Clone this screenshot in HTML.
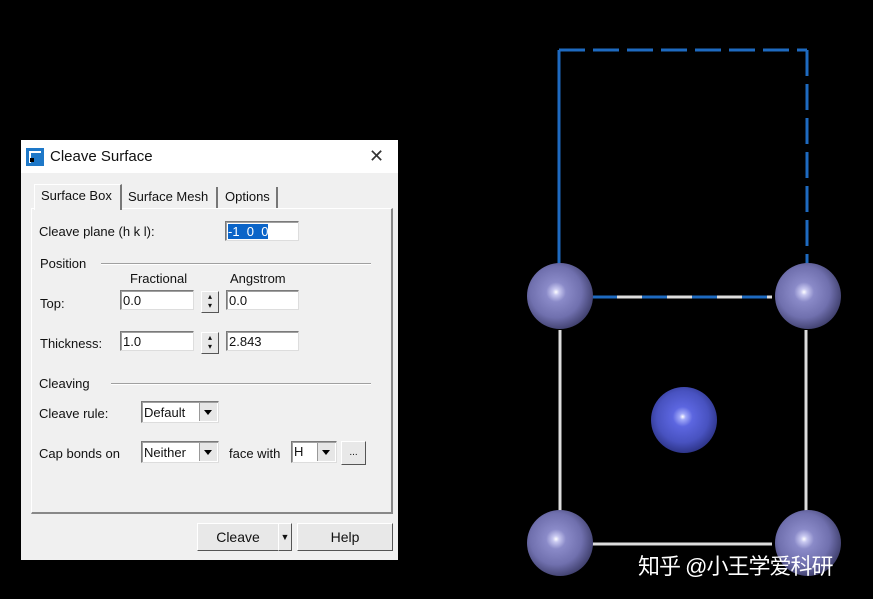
<!DOCTYPE html>
<html><head><meta charset="utf-8"><style>
body{margin:0;width:873px;height:599px;background:#000;position:relative;overflow:hidden;font-family:"Liberation Sans",Arial,sans-serif;font-size:13px;color:#111}
.a{position:absolute}
.dlg{left:21px;top:140px;width:377px;height:420px;background:#f0f0f0}
.tb{left:0;top:0;width:377px;height:33px;background:#fff}
.inp{position:absolute;background:#fff;border:1px solid #7a7a7a;border-right-color:#ddd;border-bottom-color:#ddd;box-shadow:inset 1px 1px 0 #a0a0a0;height:20px;line-height:20px;padding-left:2px;box-sizing:border-box}
.btn{position:absolute;background:#e8e8e8;border:1px solid #fff;border-right-color:#555;border-bottom-color:#555;box-sizing:border-box;text-align:center}
.dd{position:absolute;width:18px;height:18px;top:1px;right:1px;background:#e6e6e6;border-left:1px solid #999;box-sizing:border-box}
.dd:after{content:"";position:absolute;left:4px;top:7px;border:4px solid transparent;border-top:5px solid #000;border-bottom:0}
.hr{position:absolute;height:1px;background:#a0a0a0;border-bottom:1px solid #fff}
</style></head><body>
<svg class="a" style="left:0;top:0" width="873" height="599">
<defs>
<radialGradient id="g" cx="0.44" cy="0.44" r="0.6"><stop offset="0" stop-color="#ffffff"/><stop offset="0.08" stop-color="#c8c8f0"/><stop offset="0.25" stop-color="#8a8ac8"/><stop offset="0.65" stop-color="#7070ae"/><stop offset="1" stop-color="#3c3c68"/></radialGradient>
<radialGradient id="g2" cx="0.48" cy="0.45" r="0.6"><stop offset="0" stop-color="#ffffff"/><stop offset="0.08" stop-color="#a0a8f8"/><stop offset="0.25" stop-color="#5c66e0"/><stop offset="0.65" stop-color="#4852c0"/><stop offset="1" stop-color="#262c78"/></radialGradient>
</defs>
<line x1="559" y1="50" x2="559" y2="265" stroke="#1e6ac0" stroke-width="3"/>
<line x1="559" y1="50" x2="807" y2="50" stroke="#1e6ac0" stroke-width="3" stroke-dasharray="26,8"/>
<line x1="807" y1="50" x2="807" y2="265" stroke="#1e6ac0" stroke-width="3" stroke-dasharray="26,8"/>
<line x1="592" y1="297" x2="772" y2="297" stroke="#ddd" stroke-width="3"/>
<line x1="592" y1="297" x2="772" y2="297" stroke="#1e6ac0" stroke-width="3" stroke-dasharray="25,25"/>
<line x1="560" y1="330" x2="560" y2="512" stroke="#ddd" stroke-width="3"/>
<line x1="806" y1="330" x2="806" y2="512" stroke="#ddd" stroke-width="3"/>
<line x1="592" y1="544" x2="772" y2="544" stroke="#ddd" stroke-width="3"/>
<circle cx="560" cy="296" r="33" fill="url(#g)"/>
<circle cx="808" cy="296" r="33" fill="url(#g)"/>
<circle cx="560" cy="543" r="33" fill="url(#g)"/>
<circle cx="808" cy="543" r="33" fill="url(#g)"/>
<circle cx="684" cy="420" r="33" fill="url(#g2)"/>
</svg>
<div class="a" style="left:638px;top:549px;font-size:22px;letter-spacing:-1px;color:#fff;font-family:'Liberation Sans','Noto Sans CJK SC',sans-serif">知乎 @小王学爱科研</div>
<div class="a dlg">
 <div class="a tb">
  <div class="a" style="left:5px;top:8px;width:18px;height:18px;background:#1e78c8"><div class="a" style="left:3px;top:3px;width:12px;height:12px;border:2px solid #fff;border-right:0;border-bottom:0;box-sizing:border-box"></div><div class="a" style="left:4px;top:10px;width:4px;height:4px;background:#000"></div></div>
  <div class="a" style="left:29px;top:8px;font-size:15px">Cleave Surface</div>
  <div class="a" style="left:348px;top:6px;font-size:18px;color:#333">✕</div>
 </div>
 <div class="a" style="left:10px;top:68px;width:362px;height:306px;border:1px solid #fff;border-right:2px solid #888;border-bottom:2px solid #888;box-sizing:border-box"></div>
 <div class="a" style="left:13px;top:44px;width:88px;height:26px;background:#f0f0f0;border:1px solid #fff;border-right:2px solid #777;border-bottom:0;box-sizing:border-box;padding:3px 0 0 6px">Surface Box</div>
 <div class="a" style="left:102px;top:47px;width:95px;height:21px;border-right:2px solid #777;padding:2px 0 0 5px;box-sizing:border-box">Surface Mesh</div>
 <div class="a" style="left:199px;top:47px;width:58px;height:21px;border-right:2px solid #777;padding:2px 0 0 5px;box-sizing:border-box">Options</div>
 <div class="a" style="left:18px;top:84px">Cleave plane (h k l):</div>
 <div class="inp" style="left:204px;top:81px;width:74px"><span style="background:#0a64c8;color:#fff">-1&nbsp; 0&nbsp; 0</span></div>
 <div class="a" style="left:19px;top:116px">Position</div>
 <div class="hr" style="left:80px;top:123px;width:270px"></div>
 <div class="a" style="left:109px;top:131px">Fractional</div>
 <div class="a" style="left:209px;top:131px">Angstrom</div>
 <div class="a" style="left:19px;top:156px">Top:</div>
 <div class="inp" style="left:99px;top:150px;width:74px">0.0</div>
 <div class="btn" style="left:180px;top:151px;width:18px;height:22px;font-size:8px;line-height:9px">▴<br>▾</div>
 <div class="inp" style="left:205px;top:150px;width:73px">0.0</div>
 <div class="a" style="left:19px;top:196px">Thickness:</div>
 <div class="inp" style="left:99px;top:191px;width:74px">1.0</div>
 <div class="btn" style="left:180px;top:192px;width:18px;height:22px;font-size:8px;line-height:9px">▴<br>▾</div>
 <div class="inp" style="left:205px;top:191px;width:73px">2.843</div>
 <div class="a" style="left:18px;top:236px">Cleaving</div>
 <div class="hr" style="left:90px;top:243px;width:260px"></div>
 <div class="a" style="left:18px;top:266px">Cleave rule:</div>
 <div class="inp" style="left:120px;top:261px;width:78px;height:22px;line-height:22px">Default<div class="dd"></div></div>
 <div class="a" style="left:18px;top:306px">Cap bonds on</div>
 <div class="inp" style="left:120px;top:301px;width:78px;height:22px;line-height:22px">Neither<div class="dd"></div></div>
 <div class="a" style="left:208px;top:306px">face with</div>
 <div class="inp" style="left:270px;top:301px;width:46px;height:22px;line-height:20px">H<div class="dd"></div></div>
 <div class="btn" style="left:320px;top:301px;width:25px;height:24px;font-size:10px;line-height:22px">...</div>
 <div class="btn" style="left:176px;top:383px;width:82px;height:28px;line-height:26px;font-size:14px">Cleave</div>
 <div class="btn" style="left:257px;top:383px;width:14px;height:28px;font-size:9px;line-height:26px">▼</div>
 <div class="btn" style="left:276px;top:383px;width:96px;height:28px;line-height:26px;font-size:14px">Help</div>
</div>
</body></html>
